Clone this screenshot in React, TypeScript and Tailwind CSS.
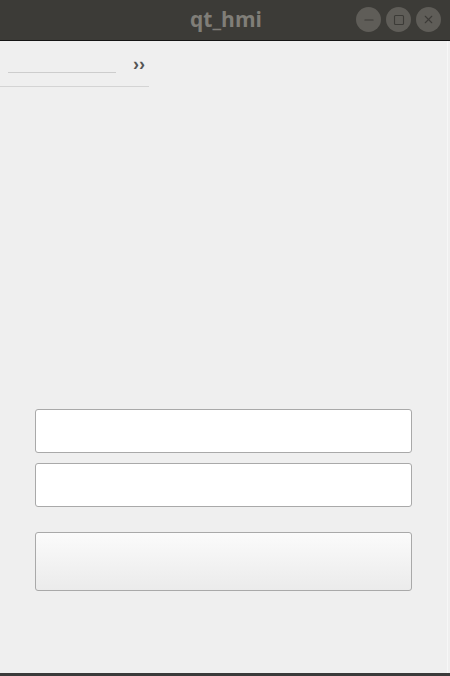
import { Minus, Square, X } from "lucide-react";

// window title bar, ubuntu style
function TitleBar() {
  return (
    <div className="relative h-[41px] bg-[#3c3b37] border-b border-[#141414] flex items-center justify-center">
      <span
        className="text-[21px] font-bold text-[#807e78] pl-[2px]"
        style={{ fontFamily: '"Open Sans", "DejaVu Sans", sans-serif' }}
      >
        qt_hmi
      </span>
      <div className="absolute right-[9px] top-[7px] flex gap-[5px]">
        <div className="w-[25px] h-[25px] rounded-full bg-[#5f5d58] flex items-center justify-center">
          <Minus className="w-[14px] h-[14px] text-[#3c3b37]" strokeWidth={2} />
        </div>
        <div className="w-[25px] h-[25px] rounded-full bg-[#5f5d58] flex items-center justify-center">
          <Square className="w-[12px] h-[12px] text-[#3c3b37]" strokeWidth={2.2} />
        </div>
        <div className="w-[25px] h-[25px] rounded-full bg-[#5f5d58] flex items-center justify-center">
          <X className="w-[13px] h-[13px] text-[#3c3b37]" strokeWidth={2} />
        </div>
      </div>
    </div>
  );
}

export default function App() {
  return (
    <div
      className="w-[450px] h-[676px] bg-[#efefef] flex flex-col overflow-hidden"
      style={{ fontFamily: '"Liberation Sans", sans-serif' }}
    >
      <TitleBar />

      <div className="flex-1 flex flex-col border-r border-[#f7f7f7] mr-[2px]">
        {/* tab strip */}
        <div className="w-[149px] h-[46px] border-b border-[#d4d4d4] relative">
          <div className="absolute left-[8px] top-[31px] w-[108px] h-px bg-[#cdcdcd]" />
          <span className="absolute left-[133px] top-[14px] text-[18px] font-bold text-[#555] leading-none">
            ››
          </span>
        </div>

        {/* form */}
        <div className="flex-1 flex flex-col px-[35px] pt-[322px]">
          <div className="flex flex-col gap-[10px]">
            <input className="h-[44px] w-full bg-white border border-[#a9a9a9] rounded-[3px] outline-none" />
            <input className="h-[44px] w-full bg-white border border-[#a9a9a9] rounded-[3px] outline-none" />
          </div>
          <button className="mt-[25px] h-[59px] w-full rounded-[3px] border border-[#a9a9a9] bg-gradient-to-b from-[#fbfbfb] to-[#ebebeb]" />
        </div>
      </div>

      <div className="h-[3px] bg-[#3a3a3a]" />
    </div>
  );
}
